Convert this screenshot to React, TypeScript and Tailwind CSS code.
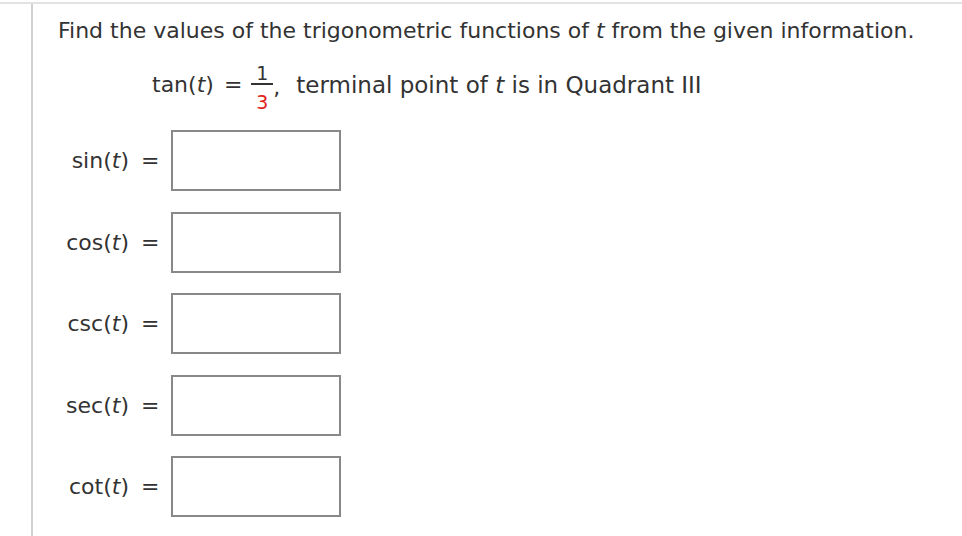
const font = { fontFamily: '"DejaVu Sans", Verdana, sans-serif' };

const rows = ["sin", "cos", "csc", "sec", "cot"];

function T() {
  return <span className="italic">t</span>;
}

export default function App() {
  return (
    <div className="w-[962px] h-[536px] bg-white text-[#333] overflow-hidden" style={font}>
      <div className="h-[2px] bg-white" />
      <div className="h-[2px] bg-[#e3e3e3]" />
      <div className="flex h-full">
        <div className="w-[31px]" />
        <div className="w-[2px] bg-[#d0d0d0]" />
        <div className="flex-1 pl-[25px] pt-[13px]">
          <p className="text-[22px] leading-[28px] whitespace-nowrap">
            Find the values of the trigonometric functions of <T /> from the given information.
          </p>
          <div className="flex items-center pl-[94px] mt-[17px] text-[22px] leading-[28px] whitespace-nowrap">
            <span>
              tan(<T />)
            </span>
            <span className="ml-[10px]">=</span>
            <span className="ml-[9px] relative top-[3px] inline-flex flex-col items-center text-[19px] leading-[16px]">
              <span className="w-[22px] text-center pb-[2px] border-b-[2px] border-[#333]">1</span>
              <span className="pt-[9px] text-[#e2231a]">3</span>
            </span>
            <span className="relative top-[3px]">,</span>
            <span className="ml-[16px] text-[23px]">
              terminal point of <T /> is in Quadrant III
            </span>
          </div>
          <div className="flex flex-col gap-[20.5px] mt-[23px] text-[22px]">
            {rows.map((r) => (
              <div key={r} className="flex items-center">
                <span className="w-[71px] text-right">
                  {r}(<T />)
                </span>
                <span className="ml-[12px]">=</span>
                <div className="ml-[12px] w-[170px] h-[61px] border-2 border-[#888] bg-white" />
              </div>
            ))}
          </div>
        </div>
      </div>
    </div>
  );
}
